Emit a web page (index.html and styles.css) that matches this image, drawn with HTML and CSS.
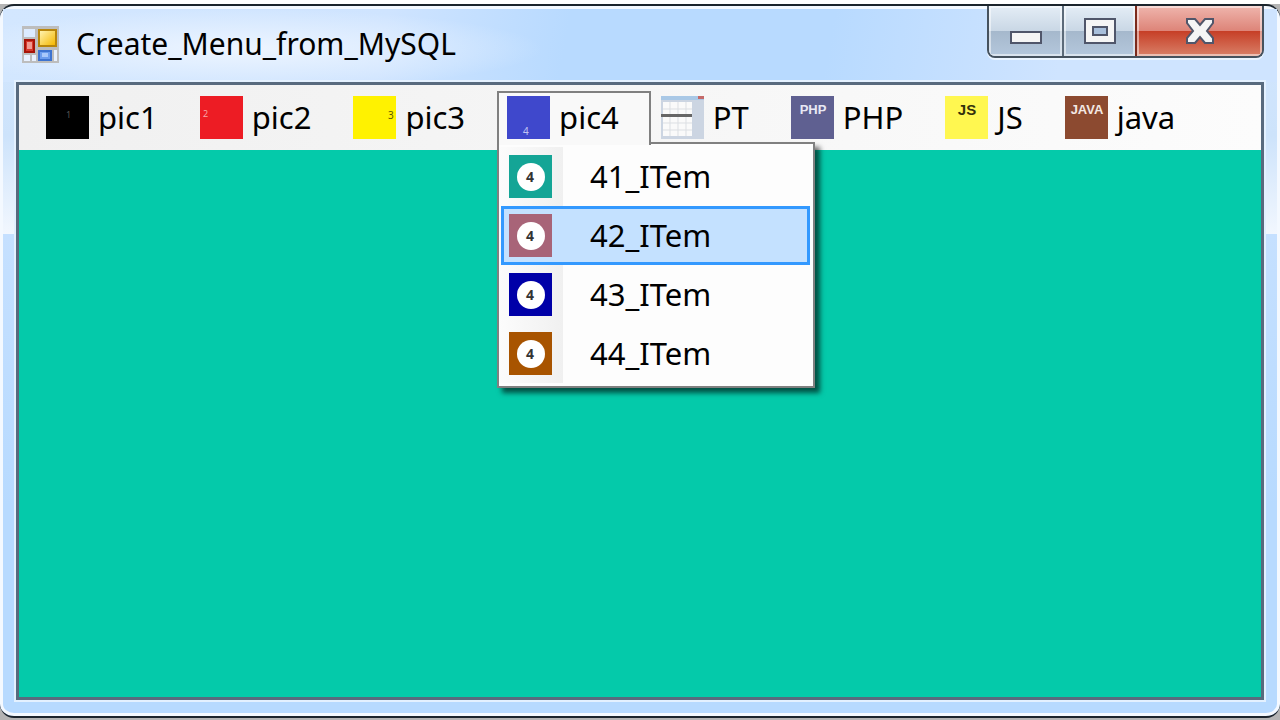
FILE: index.html
```html
<!DOCTYPE html>
<html lang="en">

<head>
    <meta charset="UTF-8">
    <meta name="viewport" content="width=device-width, initial-scale=1.0">
    <title>Create_Menu_from_MySQL</title>
    <link rel="stylesheet" href="styles.css">
</head>

<body>
    <div class="window">
        <header class="title-bar">
            <svg class="app-icon" viewBox="0 0 37 37" aria-hidden="true">
                <defs>
                    <linearGradient id="gold" x2="1" y2="1">
                        <stop offset="0" stop-color="#fff3b0"/>
                        <stop offset="1" stop-color="#f5b800"/>
                    </linearGradient>
                </defs>
                <rect width="37" height="37" fill="#bdbdbd"/>
                <rect x="2" y="3" width="11" height="8" fill="#dcebff"/>
                <rect x="2" y="29" width="6" height="6" fill="#e8f1ff"/>
                <rect x="10" y="29" width="4" height="6" fill="#e8f1ff"/>
                <rect x="32" y="24" width="3" height="11" fill="#e8f1ff"/>
                <rect x="16" y="3" width="19" height="18" fill="#b8860b"/>
                <rect x="18" y="5" width="15" height="14" fill="url(#gold)"/>
                <rect x="2" y="13" width="11" height="14" fill="#a81408"/>
                <rect x="4" y="15" width="7" height="10" fill="#d8382c"/>
                <rect x="5" y="16" width="5" height="7" fill="#f09a90"/>
                <rect x="16" y="24" width="14" height="11" fill="#3d73d0"/>
                <rect x="18" y="26" width="10" height="7" fill="#6c9dee"/>
                <rect x="20" y="27" width="6" height="4" fill="#a8c8fb"/>
            </svg>
            <h1>Create_Menu_from_MySQL</h1>
            <div class="window-buttons">
                <button type="button" class="minimize" aria-label="Minimize">
                    <svg width="34" height="30" viewBox="0 0 34 30">
                        <rect x="2" y="16" width="30" height="11" fill="#f5f5f5" stroke="#50566a" stroke-width="2"/>
                    </svg>
                </button>
                <button type="button" class="maximize" aria-label="Maximize">
                    <svg width="32" height="28" viewBox="0 0 32 28">
                        <rect x="1" y="2" width="30" height="24" fill="#f5f5f5" stroke="#50566a" stroke-width="2"/>
                        <rect x="9" y="10" width="14" height="8" fill="#a9c0dc" stroke="#50566a" stroke-width="2"/>
                    </svg>
                </button>
                <button type="button" class="close" aria-label="Close">
                    <svg width="30" height="28" viewBox="0 0 30 28">
                        <path d="M2 2h8l5 6 5-6h8v4l-6 8 6 7v5h-8l-5-6-5 6H2v-5l6-7-6-8z" fill="#f5f5f5" stroke="#50566a" stroke-width="2"/>
                    </svg>
                </button>
            </div>
        </header>

        <main class="client">
            <nav class="menu-bar">
                <button type="button" class="menu-item">
                    <svg class="icon" viewBox="0 0 43 43"><rect width="43" height="43" fill="#000"/><text x="20" y="22" font-size="9" fill="#555">1</text></svg>
                    <span>pic1</span>
                </button>
                <button type="button" class="menu-item">
                    <svg class="icon" viewBox="0 0 43 43"><rect width="43" height="43" fill="#ed1c24"/><text x="3" y="21" font-size="9" fill="#f7a5a8">2</text></svg>
                    <span>pic2</span>
                </button>
                <button type="button" class="menu-item">
                    <svg class="icon" viewBox="0 0 43 43"><rect width="43" height="43" fill="#fff200"/><text x="35" y="23" font-size="10" fill="#5e5a00">3</text></svg>
                    <span>pic3</span>
                </button>
                <div class="menu-group">
                    <button type="button" class="menu-item open" aria-expanded="true">
                        <svg class="icon" viewBox="0 0 43 43"><rect width="43" height="43" fill="#3f48cc"/><text x="16" y="39" font-size="10" fill="#c0c4f2">4</text></svg>
                        <span>pic4</span>
                    </button>
                    <div class="dropdown">
                        <button type="button" class="dropdown-item">
                            <svg class="icon" viewBox="0 0 43 43"><rect width="43" height="43" fill="#14a596"/><circle cx="22" cy="22" r="14" fill="#fff"/><text x="17" y="27" font-size="14" font-weight="bold" fill="#333">4</text></svg>
                            <span>41_ITem</span>
                        </button>
                        <button type="button" class="dropdown-item selected">
                            <svg class="icon" viewBox="0 0 43 43"><rect width="43" height="43" fill="#a86478"/><circle cx="22" cy="22" r="14" fill="#fff"/><text x="17" y="27" font-size="14" font-weight="bold" fill="#333">4</text></svg>
                            <span>42_ITem</span>
                        </button>
                        <button type="button" class="dropdown-item">
                            <svg class="icon" viewBox="0 0 43 43"><rect width="43" height="43" fill="#0000a8"/><circle cx="22" cy="22" r="14" fill="#fff"/><text x="17" y="27" font-size="14" font-weight="bold" fill="#333">4</text></svg>
                            <span>43_ITem</span>
                        </button>
                        <button type="button" class="dropdown-item">
                            <svg class="icon" viewBox="0 0 43 43"><rect width="43" height="43" fill="#a85400"/><circle cx="22" cy="22" r="14" fill="#fff"/><text x="17" y="27" font-size="14" font-weight="bold" fill="#333">4</text></svg>
                            <span>44_ITem</span>
                        </button>
                    </div>
                </div>
                <button type="button" class="menu-item">
                    <svg class="icon" viewBox="0 0 43 43">
                        <rect width="43" height="43" fill="#ccd5e2"/>
                        <rect width="43" height="4" fill="#a9c8e6"/>
                        <rect x="37" width="6" height="3" fill="#c46a6a"/>
                        <rect x="2" y="6" width="29" height="34" fill="#fafafa"/>
                        <path d="M9 6v34M17 6v34M25 6v34M2 13h29M2 27h29M2 34h29" stroke="#dcdfe3"/>
                        <rect y="18" width="31" height="3" fill="#666"/>
                    </svg>
                    <span>PT</span>
                </button>
                <button type="button" class="menu-item">
                    <svg class="icon" viewBox="0 0 43 43"><rect width="43" height="43" fill="#5f6091"/><text class="logo-text" x="22" y="18" font-size="13" fill="#e8e8f4">PHP</text></svg>
                    <span>PHP</span>
                </button>
                <button type="button" class="menu-item">
                    <svg class="icon" viewBox="0 0 43 43"><rect width="43" height="43" fill="#fff750"/><text class="logo-text" x="22" y="19" font-size="15" fill="#33310c">JS</text></svg>
                    <span>JS</span>
                </button>
                <button type="button" class="menu-item">
                    <svg class="icon" viewBox="0 0 43 43"><rect width="43" height="43" fill="#8c4a30"/><text class="logo-text" x="22" y="18" font-size="13" fill="#f3e8e4">JAVA</text></svg>
                    <span>java</span>
                </button>
            </nav>
        </main>
    </div>
</body>

</html>
```
FILE: styles.css
```css
:root {
    --frame-dark: #1b242c;
    --client-border: #586a7e;
    --client-color: #04caaa;
    --menu-border: #808080;
    --menu-background: #fdfdfd;
    --select-border: #3399ff;
    --select-background: #c4e1ff;
}

* {
    box-sizing: border-box;
}

body {
    margin: 0;
    padding: 4px 0 2px;
    min-height: 100vh;
    display: flex;
    background: linear-gradient(#fff 4px, #b4b4b4 4px);
    font-family: "Noto Sans", "Open Sans", sans-serif;
    color: #000;
}

button {
    font: inherit;
    color: inherit;
    margin: 0;
    padding: 0;
    border: none;
    background: none;
}

.window {
    flex: 1;
    display: flex;
    flex-direction: column;
    padding: 0 16px 16px;
    border-top: 2px solid var(--frame-dark);
    border-bottom: 2px solid var(--frame-dark);
    border-radius: 14px;
    background: linear-gradient(#d3e7ff 0, #cde3fb 130px, #f2f7fe 228px, #c5e0ff 228px, #b7daff 500px);
    box-shadow: inset 0 0 0 3px #f4f9ff;
}

/* Title bar */
.title-bar {
    display: flex;
    align-items: center;
    height: 76px;
    margin: 0 -13px;
    padding: 0 13px 0 19px;
    background: radial-gradient(ellipse 300px 40px at 240px 40px, #edf5ff, transparent),
        linear-gradient(100deg, #d3e7ff 0, #cfe4ff 380px, #b8daff 560px, #b8daff 820px, #cfe4ff 1050px);
    background-position: 0 3px;
    background-repeat: no-repeat;
}

.app-icon {
    width: 37px;
    height: 37px;
    margin-right: 17px;
}

.title-bar h1 {
    flex: 1;
    margin: 0;
    font-size: 30px;
    font-weight: 400;
    line-height: 40px;
}

.window-buttons {
    align-self: flex-start;
    display: flex;
    height: 52px;
    border: 2px solid #46525e;
    border-top: none;
    border-radius: 0 0 8px 8px;
    overflow: hidden;
    box-shadow: 0 2px 0 #eaf4ff;
}

.window-buttons button {
    display: flex;
    align-items: center;
    justify-content: center;
    width: 75px;
    border-right: 2px solid #5c6a79;
    background: linear-gradient(#e4edf6, #c9d7e5 50%, #a5b8cc 50%, #b4c7dc);
    box-shadow: inset 0 0 0 2px rgba(255, 255, 255, 0.5);
}

.window-buttons .maximize {
    width: 73px;
    border-right-color: #7c2a1c;
}

.window-buttons .close {
    width: 125px;
    border-right: none;
    background: linear-gradient(#efb5ad, #dd8478 50%, #c63e26 50%, #d98068);
}

/* Client area */
.client {
    flex: 1;
    border: 3px solid var(--client-border);
    background: var(--client-color);
    box-shadow: 0 0 0 2px #e4f1ff;
}

.menu-bar {
    display: flex;
    align-items: center;
    height: 65px;
    padding-left: 17px;
    background: linear-gradient(90deg, #f0f0f0, #fcfcfc);
}

.menu-group {
    position: relative;
}

.menu-item {
    display: flex;
    align-items: center;
    gap: 9px;
    height: 54px;
    padding: 0 32px 2px 10px;
    font-size: 31px;
    line-height: 40px;
}

.menu-item .icon {
    margin-top: 2px;
}

.menu-item.open {
    position: relative;
    z-index: 2;
    padding: 0 30px 4px 8px;
    border: 2px solid var(--menu-border);
    border-bottom: none;
    background: #f9f9f9;
}

.icon {
    flex: none;
    width: 43px;
    height: 43px;
}

.logo-text {
    font-family: "Liberation Sans", sans-serif;
    font-weight: bold;
    text-anchor: middle;
}

.dropdown {
    position: absolute;
    z-index: 1;
    top: 51px;
    left: 0;
    width: 318px;
    padding: 3px 3px 3px 2px;
    border: 2px solid var(--menu-border);
    background: linear-gradient(90deg, #fcfcfc, #f0f0f0) 0 3px / 64px 236px no-repeat var(--menu-background);
    box-shadow: 5px 5px 5px rgba(0, 0, 0, 0.6);
}

.dropdown-item {
    display: flex;
    align-items: center;
    gap: 38px;
    width: 100%;
    height: 59px;
    padding: 0 5px;
    border: 3px solid transparent;
    font-size: 31px;
    line-height: 40px;
}

.dropdown-item.selected {
    border-color: var(--select-border);
    background: var(--select-background);
}
```
